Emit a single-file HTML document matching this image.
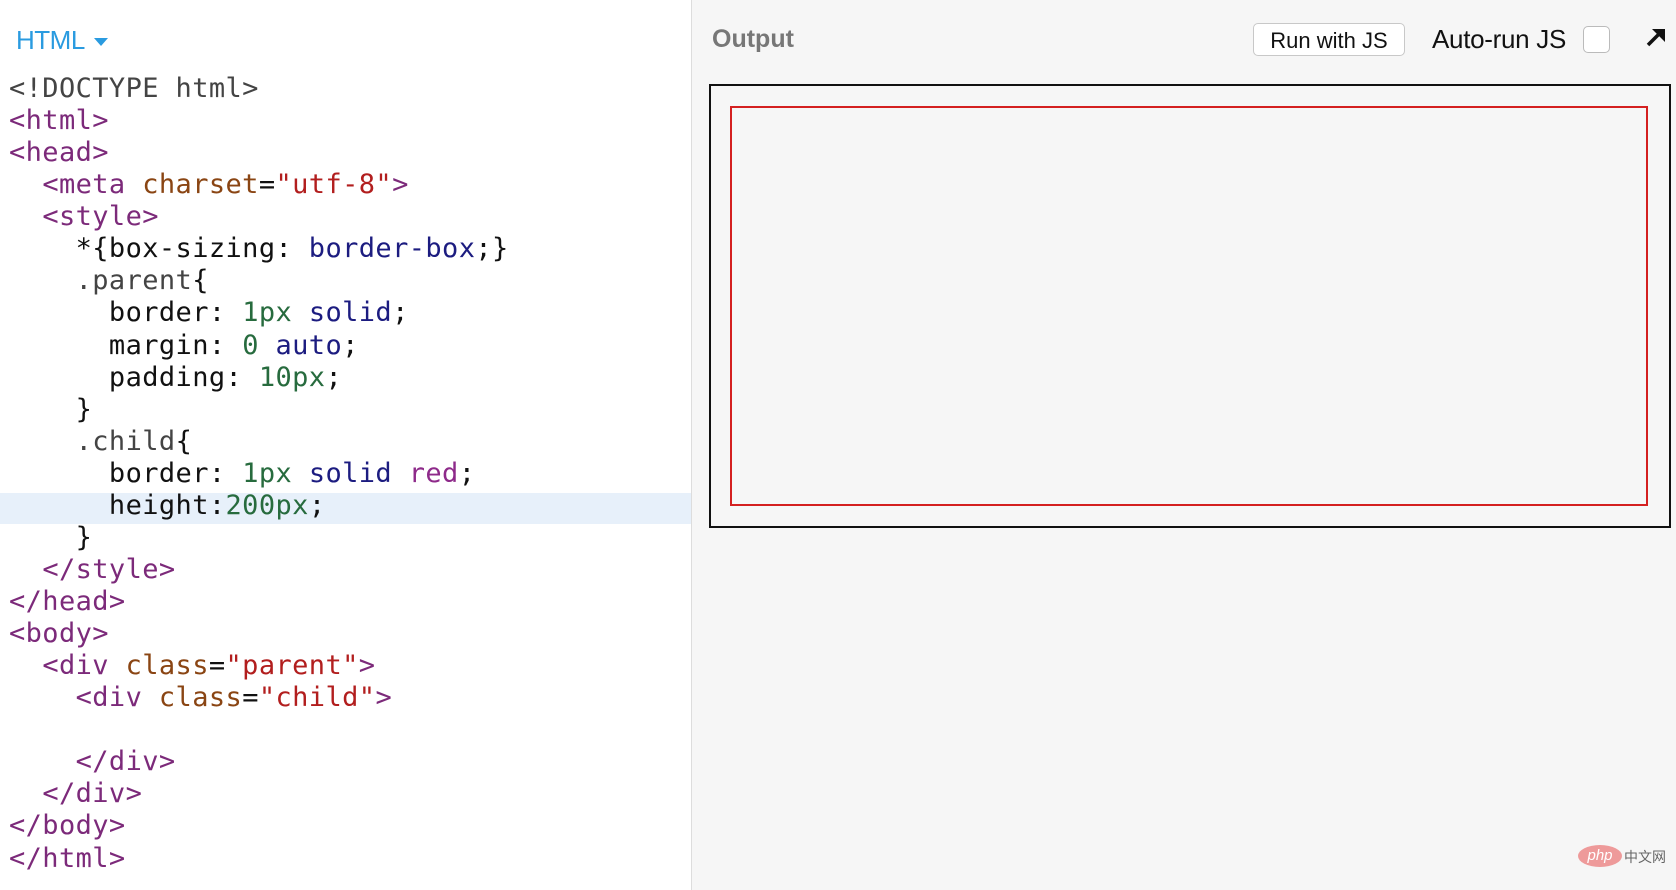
<!DOCTYPE html>
<html><head><meta charset="utf-8"><style>
*{box-sizing:border-box;margin:0;padding:0}
body{width:1676px;height:890px;overflow:hidden;background:#fff;position:relative;font-family:"Liberation Sans",sans-serif}
.left{position:absolute;left:0;top:0;width:691px;height:890px;background:#fff}
.right{position:absolute;left:691px;top:0;width:985px;height:890px;background:#f6f6f6;border-left:1px solid #ddd}
.lang{position:absolute;left:16px;top:25px;font-size:26px;color:#2a9be0;letter-spacing:-0.5px}
.lang .tri{display:inline-block;width:0;height:0;border-left:7px solid transparent;border-right:7px solid transparent;border-top:8px solid #2a9be0;margin-left:9px;vertical-align:middle}
.hl{position:absolute;left:0;top:493px;width:691px;height:31px;background:#e7f0fa}
pre{position:absolute;left:9px;top:73px;font-family:"DejaVu Sans Mono","Liberation Mono",monospace;font-size:27px;line-height:32.07px;color:#111;letter-spacing:0.4px}
.t{color:#7c2a7a}.a{color:#8a4513}.s{color:#b21e1e}.v{color:#1c1c80}.n{color:#276b3e}.d{color:#444}.k{color:#8e2a8a}
.out{position:absolute;left:712px;top:25px;font-size:25px;font-weight:bold;color:#777}
.btn{position:absolute;left:1253px;top:23px;width:152px;height:33px;border:1px solid #c8c8c8;border-radius:5px;background:#fff;font-size:22px;color:#111;text-align:center;line-height:33px}
.auto{position:absolute;left:1432px;top:24px;font-size:26px;color:#111;letter-spacing:-0.3px}
.cb{position:absolute;left:1583px;top:26px;width:27px;height:27px;border:1px solid #bbb;border-radius:5px;background:#fff}
.box{position:absolute;left:709px;top:84px;width:962px;height:444px;border:2px solid #111}
.child{position:absolute;left:730px;top:106px;width:918px;height:400px;border:2px solid #d42020}
.wm{position:absolute;left:1578px;top:845px;width:44px;height:22px;border-radius:50%;background:#ee9a9a;color:#fff;font-size:15px;font-style:italic;text-align:center;line-height:22px}
.wm2{position:absolute;left:1624px;top:847px;font-size:14px;color:#666;font-family:"Noto Sans CJK SC",sans-serif}
</style></head><body>
<div class="left">
<div class="lang">HTML<span class="tri"></span></div>
<div class="hl"></div>
<pre><span class="d">&lt;!DOCTYPE html&gt;</span>
<span class="t">&lt;html&gt;</span>
<span class="t">&lt;head&gt;</span>
  <span class="t">&lt;meta</span> <span class="a">charset</span>=<span class="s">"utf-8"</span><span class="t">&gt;</span>
  <span class="t">&lt;style&gt;</span>
    *{box-sizing: <span class="v">border-box</span>;}
    <span class="d">.parent</span>{
      border: <span class="n">1px</span> <span class="v">solid</span>;
      margin: <span class="n">0</span> <span class="v">auto</span>;
      padding: <span class="n">10px</span>;
    }
    <span class="d">.child</span>{
      border: <span class="n">1px</span> <span class="v">solid</span> <span class="k">red</span>;
      height:<span class="n">200px</span>;
    }
  <span class="t">&lt;/style&gt;</span>
<span class="t">&lt;/head&gt;</span>
<span class="t">&lt;body&gt;</span>
  <span class="t">&lt;div</span> <span class="a">class</span>=<span class="s">"parent"</span><span class="t">&gt;</span>
    <span class="t">&lt;div</span> <span class="a">class</span>=<span class="s">"child"</span><span class="t">&gt;</span>

    <span class="t">&lt;/div&gt;</span>
  <span class="t">&lt;/div&gt;</span>
<span class="t">&lt;/body&gt;</span>
<span class="t">&lt;/html&gt;</span></pre>
</div>
<div class="right"></div>
<div class="out">Output</div>
<div class="btn">Run with JS</div>
<div class="auto">Auto-run JS</div>
<div class="cb"></div>
<svg style="position:absolute;left:1645px;top:26px" width="22" height="22" viewBox="0 0 22 22"><path d="M3 19 L17 5" stroke="#111" stroke-width="3.5"/><path d="M7 3 L20 3 L20 16 Z" fill="#111"/></svg>
<div class="box"></div>
<div class="child"></div>
<div class="wm">php</div>
<div class="wm2">中文网</div>
</body></html>
